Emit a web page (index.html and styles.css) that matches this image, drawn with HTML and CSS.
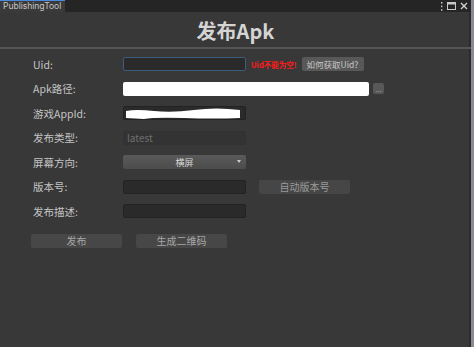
FILE: index.html
```html
<!DOCTYPE html>
<html lang="zh-CN">
<head>
    <meta charset="UTF-8">
    <title>PublishingTool</title>
    <link rel="stylesheet" href="styles.css">
</head>
<body>
    <div class="window">
        <div class="tab-bar">
            <div class="tab">PublishingTool</div>
            <div class="tab-icons">
                <svg width="3" height="9" viewBox="0 0 3 9"><rect x="1" y="0" width="1.4" height="1.6" fill="#c8c8c8"/><rect x="1" y="3.6" width="1.4" height="1.6" fill="#c8c8c8"/><rect x="1" y="7.2" width="1.4" height="1.6" fill="#c8c8c8"/></svg>
                <svg width="9" height="8" viewBox="0 0 9 8"><rect x="0.5" y="0.5" width="8" height="7" fill="none" stroke="#c8c8c8"/><rect x="0.5" y="0.5" width="8" height="2" fill="#c8c8c8"/></svg>
                <svg width="8" height="8" viewBox="0 0 8 8"><path d="M1 1 L7 7 M7 1 L1 7" stroke="#d0d0d0" stroke-width="1.4"/></svg>
            </div>
        </div>

        <h1 class="title">发布Apk</h1>

        <div class="form">
            <div class="row">
                <label>Uid:</label>
                <div class="field focus"></div>
                <span class="error">Uid不能为空!</span>
                <button class="btn btn-help">如何获取Uid?</button>
            </div>
            <div class="row">
                <label>Apk路径:</label>
                <div class="field wide">
                    <svg width="246" height="14" viewBox="0 0 246 14"><path d="M0 3 Q20 1 40 3 T90 2 T140 3 T190 1 T245 2 L245 12 Q200 13 160 11 T100 12 T50 11 T0 12 Z" fill="#fff"/></svg>
                </div>
                <button class="btn btn-dots">...</button>
            </div>
            <div class="row">
                <label>游戏AppId:</label>
                <div class="field">
                    <svg width="123" height="14" viewBox="0 0 123 14"><path d="M2 4 Q12 2 30 4 T70 3 T116 3 L116 11 Q90 12 60 11 T20 12 L2 11 Z" fill="#fff"/></svg>
                </div>
            </div>
            <div class="row">
                <label>发布类型:</label>
                <div class="field disabled">latest</div>
            </div>
            <div class="row">
                <label>屏幕方向:</label>
                <div class="dropdown"><span>横屏</span><i class="arrow"></i></div>
            </div>
            <div class="row">
                <label>版本号:</label>
                <div class="field"></div>
                <button class="btn btn-auto">自动版本号</button>
            </div>
            <div class="row">
                <label>发布描述:</label>
                <div class="field"></div>
            </div>
            <div class="actions">
                <button class="btn btn-action">发布</button>
                <button class="btn btn-action">生成二维码</button>
            </div>
        </div>
    </div>
</body>
</html>
```

FILE: styles.css
```css
body, html {
    margin: 0;
    padding: 0;
    height: 100%;
    overflow: hidden;
    background-color: #383838;
    font-family: "Noto Sans CJK SC", "Noto Sans", sans-serif;
    color: #c4c4c4;
}
.window {
    height: 100%;
    border-right: 3px solid #8a8a92;
    box-shadow: inset -2px 0 0 #2a2a2a;
    box-sizing: border-box;
}
.tab-bar {
    display: flex;
    justify-content: space-between;
    align-items: stretch;
    height: 12px;
    background-color: #252525;
}
.tab {
    width: 62px;
    padding-left: 3px;
    background-color: #3a3a3a;
    border-top: 1px solid #4a8ae0;
    font-size: 8.5px;
    line-height: 11px;
    color: #c8c8c8;
    font-family: "Inter", "Noto Sans", sans-serif;
}
.tab-icons {
    display: flex;
    align-items: center;
    gap: 4px;
    padding-right: 3px;
}
.title {
    margin: 0;
    height: 35px;
    line-height: 38px;
    text-align: center;
    font-size: 20px;
    font-weight: bold;
    color: #d4d4d4;
    border-bottom: 2px solid #555;
}
.form {
    padding: 3px 0 0 33px;
}
.row {
    display: flex;
    align-items: center;
    height: 24.5px;
}
label {
    width: 90px;
    font-size: 10.5px;
    color: #c4c4c4;
}
.field {
    width: 123px;
    height: 14px;
    box-sizing: border-box;
    background-color: #2a2a2a;
    border: 1px solid #222;
    border-radius: 2px;
    font-size: 10px;
    line-height: 12px;
    padding-left: 3px;
    overflow: hidden;
}
.field svg {
    display: block;
    margin-left: -3px;
}
.field.focus {
    border-color: #3d5d80;
}
.field.wide {
    width: 246px;
    background-color: #fff;
    border: none;
}
.field.disabled {
    background-color: #333;
    border-color: #323232;
    color: #6e6e6e;
}
.error {
    margin-left: 5px;
    font-size: 7.5px;
    font-weight: bold;
    color: #ff1a1a;
}
.btn {
    height: 14px;
    padding: 0;
    border: none;
    border-radius: 2px;
    font-family: "Noto Sans CJK SC", "Noto Sans", sans-serif;
    font-size: 8.5px;
    line-height: 14px;
    color: #c8c8c8;
    background-color: #585858;
}
.btn-help {
    margin-left: 5px;
    width: 62px;
}
.btn-dots {
    margin-left: 4px;
    width: 11px;
    height: 11px;
    line-height: 8px;
    font-size: 8px;
    color: #999;
}
.btn-auto {
    margin-left: 13px;
    width: 91px;
    background-color: #464646;
    color: #9a9a9a;
    font-size: 10px;
}
.dropdown {
    width: 123px;
    height: 14px;
    box-sizing: border-box;
    display: flex;
    align-items: center;
    justify-content: center;
    position: relative;
    border-radius: 2px;
    background: linear-gradient(#5a5a5a, #4c4c4c);
    font-size: 9px;
    color: #d8d8d8;
}
.arrow {
    position: absolute;
    right: 5px;
    top: 5px;
    border-left: 2px solid transparent;
    border-right: 2px solid transparent;
    border-top: 3px solid #ccc;
}
.actions {
    display: flex;
    gap: 14px;
    margin-top: 10px;
    margin-left: -2px;
}
.btn-action {
    width: 91px;
    background-color: #474747;
    color: #a8a8a8;
    font-size: 10px;
}
```
